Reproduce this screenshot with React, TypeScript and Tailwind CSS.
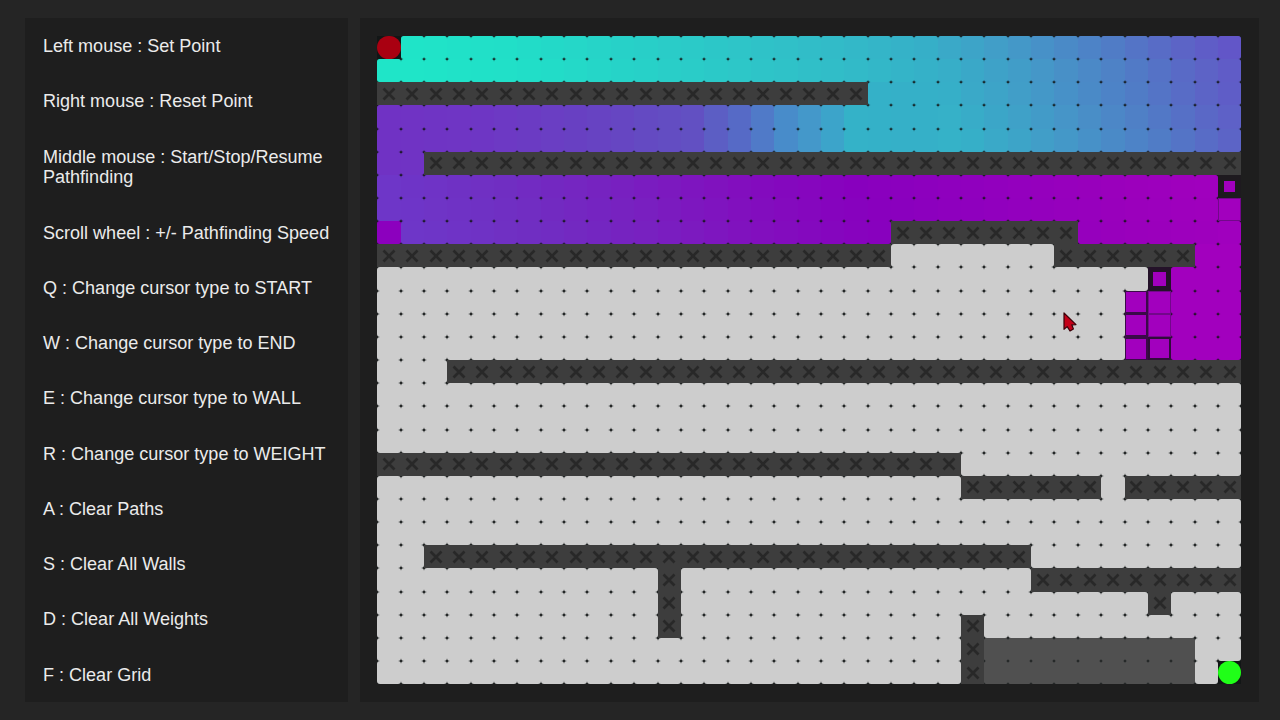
const COLS = 37;
const ROWS = 28;

type Kind = 'empty' | 'wall' | 'weight' | 'visited' | 'start' | 'end';
type Stop = [number, number, number, number];

const CONTROLS = [
  'Left mouse : Set Point',
  'Right mouse : Reset Point',
  'Middle mouse : Start/Stop/Resume Pathfinding',
  'Scroll wheel : +/- Pathfinding Speed',
  'Q : Change cursor type to START',
  'W : Change cursor type to END',
  'E : Change cursor type to WALL',
  'R : Change cursor type to WEIGHT',
  'A : Clear Paths',
  'S : Clear All Walls',
  'D : Clear All Weights',
  'F : Clear Grid',
];

// [first column, last column] per row
const WALLS: Record<number, [number, number][]> = {
  2: [[0, 20]],
  5: [[2, 36]],
  8: [[22, 29]],
  9: [[0, 21], [29, 34]],
  14: [[3, 36]],
  18: [[0, 24]],
  19: [[25, 30], [32, 36]],
  22: [[2, 27]],
  23: [[12, 12], [28, 36]],
  24: [[12, 12], [33, 33]],
  25: [[12, 12], [25, 25]],
  26: [[25, 25]],
  27: [[25, 25]],
};

// cells still growing, from just opened to nearly full
const GROWING: Record<string, string> = {
  '6,36': 'border-[6px] border-[#1e1a1f]',
  '7,36': 'border border-[#72088a]',
  '10,33': 'border-[5px] border-[#241229]',
  '11,32': 'border border-r-2 border-b-2 border-[#3a0a48]',
  '11,33': 'border border-[#72088a]',
  '12,32': 'border border-r-2 border-b-2 border-[#3a0a48]',
  '12,33': 'border border-[#72088a]',
  '13,32': 'border border-t-2 border-r-2 border-[#3a0a48]',
  '13,33': 'border-2 border-[#300c3a]',
};

// [column, r, g, b]
const TOP: Stop[] = [
  [0, 31, 229, 200],
  [5, 33, 223, 200],
  [10, 39, 209, 200],
  [16, 47, 194, 200],
  [20, 51, 184, 200],
  [23, 54, 175, 200],
  [27, 68, 152, 200],
  [31, 80, 124, 198],
  [34, 92, 100, 198],
  [36, 98, 86, 200],
];

const SECOND: Stop[] = [
  [0, 112, 50, 196],
  [4, 110, 54, 196],
  [8, 104, 64, 194],
  [13, 98, 80, 194],
  [14, 92, 94, 196],
  [15, 86, 106, 198],
  [16, 80, 122, 200],
  [17, 72, 140, 202],
  [18, 68, 152, 202],
  [19, 60, 164, 202],
  [20, 52, 178, 200],
  [25, 54, 174, 200],
];

const THIRD: Stop[] = [
  [0, 110, 54, 200],
  [5, 112, 46, 194],
  [10, 120, 32, 192],
  [15, 130, 14, 190],
  [20, 136, 0, 190],
  [26, 146, 0, 190],
  [31, 154, 0, 188],
  [36, 162, 0, 190],
];

function mix(stops: Stop[], at: number) {
  const next = stops.findIndex((s) => s[0] >= at);
  if (next <= 0) return `rgb(${(next === 0 ? stops[0] : stops[stops.length - 1]).slice(1).join(',')})`;
  const a = stops[next - 1];
  const b = stops[next];
  const t = (at - a[0]) / (b[0] - a[0]);
  const ch = [1, 2, 3].map((i) => Math.round(a[i] + (b[i] - a[i]) * t));
  return `rgb(${ch.join(',')})`;
}

function visitedColor(row: number, col: number) {
  if (row < 2) return mix(TOP, col - row * 0.8);
  if (row < 5) return col < 24 ? mix(SECOND, col) : mix(TOP, col - row * 0.5);
  if (row === 5) return mix(SECOND, col);
  if (row === 8 && col === 0) return 'rgb(140,0,190)';
  if (row > 8) return 'rgb(162,0,190)';
  return mix(THIRD, Math.max(0, col - (row - 6) * 0.6));
}

function kindOf(row: number, col: number): Kind {
  if (row === 0 && col === 0) return 'start';
  if (row === 27 && col === 36) return 'end';
  if (WALLS[row]?.some(([from, to]) => col >= from && col <= to)) return 'wall';
  if (row >= 26 && col >= 26 && col <= 34) return 'weight';
  if (row <= 8) return 'visited';
  if (row === 9 && col >= 35) return 'visited';
  if (row === 10 && col >= 33) return 'visited';
  if (row >= 11 && row <= 13 && col >= 32) return 'visited';
  return 'empty';
}

function Cell({ row, col }: { row: number; col: number }) {
  const kind = kindOf(row, col);
  const growing = GROWING[`${row},${col}`];

  if (kind === 'start') return <div className="rounded-full bg-[#a90011]" />;
  if (kind === 'end') return <div className="rounded-full bg-[#20ff18]" />;
  if (kind === 'weight') return <div className="rounded-[2px] bg-[#505050]" />;
  if (kind === 'wall') {
    return (
      <div className="flex items-center justify-center bg-[#3d3d3d]">
        <svg viewBox="0 0 14 14" className="size-3.5">
          <path d="M1.5 1.5L12.5 12.5M12.5 1.5L1.5 12.5" stroke="#282828" strokeWidth="2.6" />
        </svg>
      </div>
    );
  }
  if (growing) return <div className={`bg-[#a200be] ${growing}`} />;
  if (kind === 'visited') {
    return <div className="rounded-[2.5px]" style={{ backgroundColor: visitedColor(row, col) }} />;
  }
  return <div className="rounded-[3px] bg-[#cdcdcd]" />;
}

export default function App() {
  return (
    <div className="flex h-[720px] w-[1280px] gap-[11.5px] overflow-hidden bg-[#252525] pt-[17.5px] pb-[18px] pl-[25px] font-['Liberation_Sans',sans-serif]">
      <aside className="flex w-[323px] shrink-0 flex-col gap-[34.5px] bg-[#1e1e1e] pt-[18.6px] pl-[18px] text-[18.05px] leading-[20.75px] text-[#ebebeb]">
        {CONTROLS.map((text) => (
          <p key={text} className="w-[292px]">
            {text}
          </p>
        ))}
      </aside>

      <main className="relative w-[899.5px] shrink-0 bg-[#1e1e1e] pt-[18.5px] pl-[17.8px]">
        <div className="grid h-[648.2px] w-[864px] grid-cols-[repeat(37,minmax(0,1fr))] grid-rows-[repeat(28,minmax(0,1fr))] bg-[#121616]">
          {Array.from({ length: ROWS * COLS }, (_, i) => (
            <Cell key={i} row={Math.floor(i / COLS)} col={i % COLS} />
          ))}
        </div>

        {/* Mouse cursor */}
        <svg viewBox="0 0 14 21" className="absolute top-[294px] left-[703.5px] h-[21px] w-[14px]">
          <path
            d="M1 1V17.3L4.2 14.6L7 19L10.4 17L8.8 12.8L13 12.6Z"
            fill="#c40018"
            stroke="#3b0008"
            strokeWidth="1.2"
            strokeLinejoin="round"
          />
        </svg>
      </main>
    </div>
  );
}
